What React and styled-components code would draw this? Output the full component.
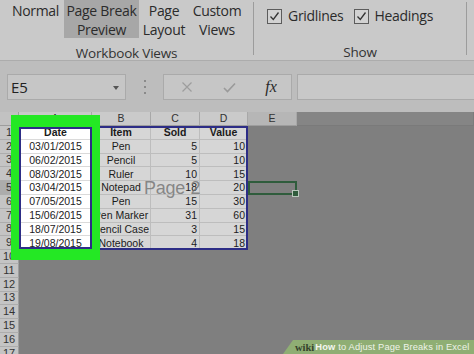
import React from "react";
import styled, { createGlobalStyle } from "styled-components";

const Global = createGlobalStyle`
  html, body { margin: 0; padding: 0; }
  body { background: #7f7f7f; font-family: "Open Sans", "Noto Sans", sans-serif; }
  * { box-sizing: border-box; }
`;

const Page = styled.div`
  width: 474px;
  height: 354px;
  overflow: hidden;
  display: flex;
  flex-direction: column;
  position: relative;
  background: #7f7f7f;
`;

/* ---------- Ribbon ---------- */
const Ribbon = styled.div`
  display: flex;
  height: 61px;
  flex: none;
  background: #c9c9c9;
  border-bottom: 1px solid #acacac;
`;

const Group = styled.div`
  display: flex;
  flex-direction: column;
  width: ${(p) => p.$w}px;
  flex: none;
`;

const ButtonRow = styled.div`
  display: flex;
  height: 38px;
  padding-left: ${(p) => p.$pl}px;
  padding-top: ${(p) => p.$pt || 0}px;
  align-items: flex-start;
`;

const ViewButton = styled.div`
  width: ${(p) => p.$w}px;
  height: 38px;
  display: flex;
  flex-direction: column;
  align-items: center;
  padding-top: 1px;
  font-size: 14px;
  line-height: 19px;
  color: #2b2b2b;
  letter-spacing: -0.3px;
  background: ${(p) => (p.$active ? "#a7a7a7" : "transparent")};
  white-space: nowrap;
`;

const GroupLabel = styled.div`
  margin-top: 7px;
  text-align: center;
  font-size: 13.5px;
  line-height: 16px;
  color: #333;
  letter-spacing: -0.2px;
`;

const Separator = styled.div`
  width: 1px;
  flex: none;
  margin: 2px 0 5px;
  background: #9c9c9c;
`;

const CheckItem = styled.label`
  display: flex;
  align-items: center;
  gap: 6px;
  margin-right: ${(p) => p.$mr || 0}px;
  font-size: 14px;
  line-height: 16px;
  color: #2b2b2b;
  letter-spacing: -0.3px;
`;

const CheckBox = styled.span`
  width: 15px;
  height: 15px;
  border: 1px solid #5c5c5c;
  background: #d2d2d2;
  display: flex;
  align-items: center;
  justify-content: center;
`;

/* ---------- Formula bar ---------- */
const FormulaBar = styled.div`
  height: 51px;
  flex: none;
  background: #bdbdbd;
  display: flex;
  align-items: flex-start;
  padding: 13px 0 0 7px;
`;

const NameBox = styled.div`
  width: 119px;
  height: 26px;
  border: 1px solid #aaaaaa;
  background: #c6c6c6;
  display: flex;
  align-items: center;
  justify-content: space-between;
  padding: 0 6px 0 3px;
  font-size: 15px;
  color: #222;
`;

const Caret = styled.span`
  width: 0;
  height: 0;
  border-left: 3.5px solid transparent;
  border-right: 3.5px solid transparent;
  border-top: 4px solid #555;
  margin-top: 2px;
`;

const Dots = styled.div`
  width: 2px;
  margin: 6px 17px 0 18px;
  display: flex;
  flex-direction: column;
  gap: 4px;
  & > span { width: 2px; height: 2px; background: #8a8a8a; }
`;

const FxBox = styled.div`
  width: 129px;
  height: 26px;
  border: 1px solid #aaaaaa;
  background: #c6c6c6;
  display: flex;
  align-items: center;
  padding-left: 16px;
`;

const FxSlot = styled.span`
  width: ${(p) => p.$w}px;
  display: flex;
  justify-content: center;
  align-items: center;
`;

const FxText = styled.span`
  font-family: "Liberation Serif", "DejaVu Serif", serif;
  font-style: italic;
  font-size: 16px;
  color: #2a2a2a;
`;

const FormulaInput = styled.div`
  flex: 1;
  height: 26px;
  margin-left: 5px;
  border: 1px solid #aaaaaa;
  border-right: none;
  background: #c8c8c8;
`;

/* ---------- Sheet ---------- */
const Sheet = styled.div`
  position: relative;
  flex: 1;
  overflow: hidden;
  background: #7f7f7f;
`;

const Grid = styled.div`
  display: grid;
  grid-template-columns: 19px 73px 59px 49px 48px 49px 1fr;
  grid-template-rows: 14px repeat(17, 13.8px);
  font-family: "Liberation Sans", Arial, sans-serif;
  font-size: 10.5px;
  color: #1b1b1b;
`;

const Placed = styled.div`
  grid-row: ${(p) => p.$r};
  grid-column: ${(p) => p.$c};
`;

const Corner = styled(Placed)`
  background: #c2c2c2;
  border-right: 1px solid #9d9d9d;
  border-bottom: 1px solid #9d9d9d;
`;

const ColHead = styled(Placed)`
  background: ${(p) => (p.$active ? "#b6b6b6" : p.$out ? "#858585" : "#cacaca")};
  border-right: 1px solid ${(p) => (p.$out ? "#7c7c7c" : "#a8a8a8")};
  border-bottom: 1px solid ${(p) => (p.$out ? "#7a7a7a" : "#9d9d9d")};
  display: flex;
  align-items: center;
  justify-content: center;
  color: #333;
  font-size: 10.5px;
  line-height: 1;
`;

const RowHead = styled(Placed)`
  background: ${(p) => (p.$active ? "#acacac" : "#c4c4c4")};
  border-right: 1px solid #9d9d9d;
  border-bottom: 1px solid #adadad;
  display: flex;
  align-items: center;
  justify-content: center;
  color: #333;
  font-size: 11px;
  line-height: 1;
`;

const Cell = styled(Placed)`
  background: ${(p) => (p.$kind === "date" ? "#ffffff" : p.$kind === "page" ? "#d6d6d6" : "transparent")};
  border-right: ${(p) => (p.$kind === "page" ? "1px solid #bdbdbd" : "none")};
  border-bottom: ${(p) =>
    p.$kind === "page" ? "1px solid #bdbdbd" : p.$kind === "date" ? "1px solid #dadada" : "none"};
  display: flex;
  align-items: center;
  justify-content: ${(p) => (p.$align === "right" ? "flex-end" : "center")};
  padding-right: ${(p) => (p.$align === "right" ? 2 : 0)}px;
  font-weight: ${(p) => (p.$bold ? 700 : 400)};
  white-space: nowrap;
  overflow: visible;
  line-height: 1;
`;

const PageFrame = styled(Placed)`
  border: 2px solid #2d2d86;
  z-index: 2;
  pointer-events: none;
`;

const Selection = styled(Placed)`
  position: relative;
  border: 2px solid #2f5c3c;
  z-index: 3;
  &::after {
    content: "";
    position: absolute;
    right: -4px;
    bottom: -4px;
    width: 5px;
    height: 5px;
    background: #2f5c3c;
    border: 1px solid #b9c9bd;
  }
`;

const PageLabel = styled.div`
  position: absolute;
  left: 144px;
  top: 67px;
  font-family: "Liberation Sans", Arial, sans-serif;
  font-size: 18px;
  line-height: 19px;
  letter-spacing: -0.3px;
  word-spacing: 1px;
  color: rgba(120, 120, 120, 0.85);
  z-index: 4;
  pointer-events: none;
`;

const Highlight = styled.div`
  position: absolute;
  left: 11px;
  top: 3px;
  width: 89px;
  height: 145px;
  border-style: solid;
  border-color: #24e824;
  border-width: 12px 8px 11px 8px;
  box-shadow: inset 0 0 0 2px #2d2d86;
  z-index: 5;
  pointer-events: none;
`;

/* ---------- Banner ---------- */
const Banner = styled.div`
  position: absolute;
  right: 0;
  bottom: 0;
  width: 191px;
  height: 14px;
  background: #8fae74;
  clip-path: polygon(10px 0, 100% 0, 100% 100%, 0 100%);
  display: flex;
  align-items: center;
  padding-left: 12px;
  font-family: "Liberation Sans", Arial, sans-serif;
  font-size: 9.3px;
  letter-spacing: 0.15px;
  color: #eef3e8;
  white-space: nowrap;
  z-index: 10;
`;

const Wiki = styled.span`
  font-family: "Liberation Serif", serif;
  font-weight: 700;
  font-size: 10.5px;
  letter-spacing: 0;
  color: #34422b;
  margin-right: 1px;
`;

const How = styled.span`
  font-weight: 700;
  color: #f3f6ef;
  margin-right: 3px;
`;

const data = [
  ["03/01/2015", "Pen", 5, 10],
  ["06/02/2015", "Pencil", 5, 10],
  ["08/03/2015", "Ruler", 10, 15],
  ["03/04/2015", "Notepad", 18, 20],
  ["07/05/2015", "Pen", 15, 30],
  ["15/06/2015", "Pen Marker", 31, 60],
  ["18/07/2015", "Pencil Case", 3, 15],
  ["19/08/2015", "Notebook", 4, 18],
];

const Check = () => (
  <svg width="11" height="11" viewBox="0 0 11 11">
    <polyline points="1.5,5.5 4.3,8.5 9.5,1.5" fill="none" stroke="#333" strokeWidth="1.3" />
  </svg>
);

export default function App() {
  const cells = [];
  cells.push(<Corner key="corner" $r={1} $c={1} />);
  ["A", "B", "C", "D", "E"].forEach((l, i) => {
    cells.push(
      <ColHead key={"h" + l} $r={1} $c={i + 2} $active={l === "E"}>
        {l}
      </ColHead>
    );
  });
  cells.push(<ColHead key="hrest" $r={1} $c={7} $out />);

  for (let r = 1; r <= 17; r++) {
    const gr = r + 1;
    cells.push(
      <RowHead key={"r" + r} $r={gr} $c={1} $active={r === 5}>
        {r}
      </RowHead>
    );
    if (r <= 9) {
      const row = r === 1 ? ["Date", "Item", "Sold", "Value"] : data[r - 2];
      const bold = r === 1;
      cells.push(
        <Cell key={"a" + r} $r={gr} $c={2} $kind="date" $bold={bold}>
          {row[0]}
        </Cell>
      );
      cells.push(
        <Cell key={"b" + r} $r={gr} $c={3} $kind="page" $bold={bold}>
          {row[1]}
        </Cell>
      );
      cells.push(
        <Cell key={"c" + r} $r={gr} $c={4} $kind="page" $bold={bold} $align={bold ? "center" : "right"}>
          {row[2]}
        </Cell>
      );
      cells.push(
        <Cell key={"d" + r} $r={gr} $c={5} $kind="page" $bold={bold} $align={bold ? "center" : "right"}>
          {row[3]}
        </Cell>
      );
    }
  }

  return (
    <>
      <Global />
      <Page>
        <Ribbon>
          <Group $w={253}>
            <ButtonRow $pl={7}>
              <ViewButton $w={57}>Normal</ViewButton>
              <ViewButton $w={75} $active>
                <span>Page Break</span>
                <span>Preview</span>
              </ViewButton>
              <ViewButton $w={50}>
                <span>Page</span>
                <span>Layout</span>
              </ViewButton>
              <ViewButton $w={56}>
                <span>Custom</span>
                <span>Views</span>
              </ViewButton>
            </ButtonRow>
            <GroupLabel>Workbook Views</GroupLabel>
          </Group>
          <Separator />
          <Group $w={212}>
            <ButtonRow $pl={13} $pt={8}>
              <CheckItem $mr={10}>
                <CheckBox>
                  <Check />
                </CheckBox>
                Gridlines
              </CheckItem>
              <CheckItem>
                <CheckBox>
                  <Check />
                </CheckBox>
                Headings
              </CheckItem>
            </ButtonRow>
            <GroupLabel>Show</GroupLabel>
          </Group>
          <Separator />
        </Ribbon>

        <FormulaBar>
          <NameBox>
            <span>E5</span>
            <Caret />
          </NameBox>
          <Dots>
            <span />
            <span />
            <span />
          </Dots>
          <FxBox>
            <FxSlot $w={14}>
              <svg width="12" height="12" viewBox="0 0 12 12">
                <path d="M1.5 1.5 L10.5 10.5 M10.5 1.5 L1.5 10.5" stroke="#9d9d9d" strokeWidth="1.2" />
              </svg>
            </FxSlot>
            <FxSlot $w={28} />
            <FxSlot $w={14}>
              <svg width="13" height="11" viewBox="0 0 13 11">
                <polyline points="1,6 4.5,9.5 12,1.5" fill="none" stroke="#9a9a9a" strokeWidth="1.6" />
              </svg>
            </FxSlot>
            <FxSlot $w={27} />
            <FxSlot $w={16}>
              <FxText>fx</FxText>
            </FxSlot>
          </FxBox>
          <FormulaInput />
        </FormulaBar>

        <Sheet>
          <Grid>
            {cells}
            <PageFrame $r="2 / 11" $c="2 / 6" />
            <Selection $r={6} $c={6} />
          </Grid>
          <PageLabel>Page 2</PageLabel>
          <Highlight />
        </Sheet>

        <Banner>
          <Wiki>wiki</Wiki>
          <How>How</How>
          to Adjust Page Breaks in Excel
        </Banner>
      </Page>
    </>
  );
}
